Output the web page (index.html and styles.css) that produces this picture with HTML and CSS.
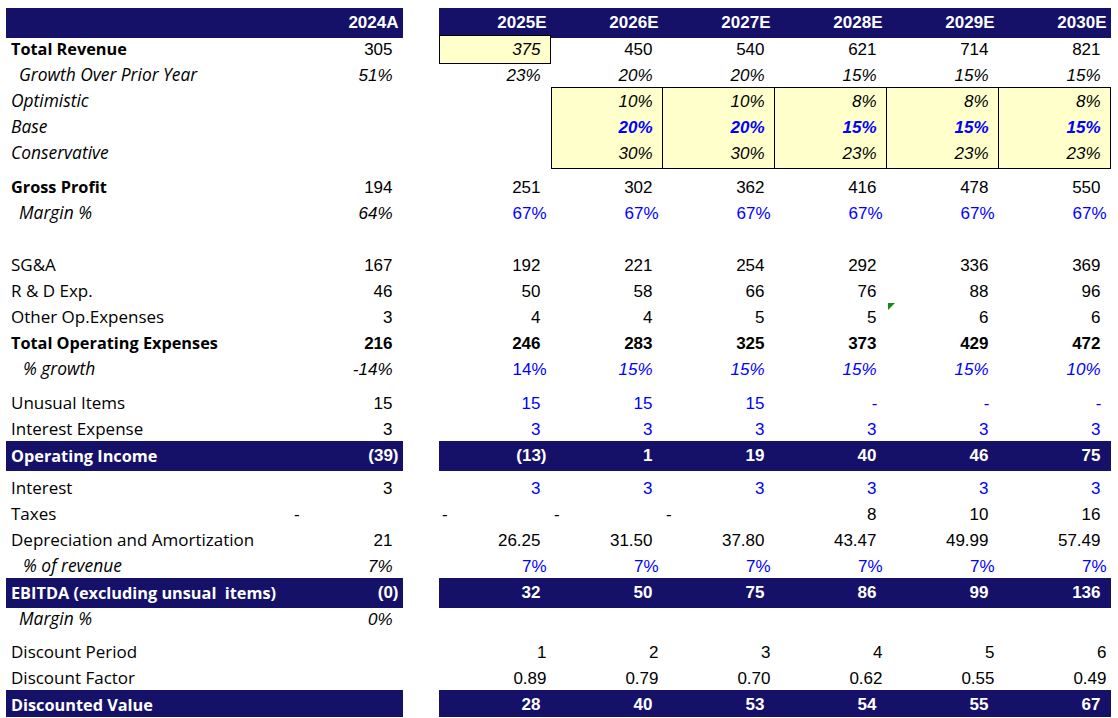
FILE: index.html
```html
<!DOCTYPE html>
<html lang="en">
<head>
<meta charset="utf-8">
<title>Revenue Projection</title>
<link rel="stylesheet" href="styles.css">
</head>
<body>
<div class="sheet">
  <div class="row t">
    <div class="lab nv"></div><div class="c nv p4">2024A</div><div class="gap"></div>
    <div class="c nv p4">2025E</div><div class="c nv p4">2026E</div><div class="c nv p4">2027E</div><div class="c nv p4">2028E</div><div class="c nv p4">2029E</div><div class="c nv p4">2030E</div>
  </div>
  <div class="row">
    <div class="lab b">Total Revenue</div><div class="c">305</div><div class="gap"></div>
    <div class="c i yb">375</div><div class="c">450</div><div class="c">540</div><div class="c">621</div><div class="c">714</div><div class="c">821</div>
  </div>
  <div class="row">
    <div class="lab i in1">Growth Over Prior Year</div><div class="c i">51%</div><div class="gap"></div>
    <div class="c i">23%</div><div class="c i">20%</div><div class="c i">20%</div><div class="c i">15%</div><div class="c i">15%</div><div class="c i">15%</div>
  </div>
  <div class="row">
    <div class="lab i">Optimistic</div><div class="c"></div><div class="gap"></div>
    <div class="c"></div><div class="c i bx bt bl">10%</div><div class="c i bx bt">10%</div><div class="c i bx bt">8%</div><div class="c i bx bt">8%</div><div class="c i bx bt">8%</div>
  </div>
  <div class="row">
    <div class="lab i">Base</div><div class="c"></div><div class="gap"></div>
    <div class="c"></div><div class="c i b blue bx bl">20%</div><div class="c i b blue bx">20%</div><div class="c i b blue bx">15%</div><div class="c i b blue bx">15%</div><div class="c i b blue bx">15%</div>
  </div>
  <div class="row">
    <div class="lab i">Conservative</div><div class="c"></div><div class="gap"></div>
    <div class="c"></div><div class="c i bx bl">30%</div><div class="c i bx">30%</div><div class="c i bx">23%</div><div class="c i bx">23%</div><div class="c i bx">23%</div>
  </div>
  <div class="sp8"></div>
  <div class="row">
    <div class="lab b">Gross Profit</div><div class="c">194</div><div class="gap"></div>
    <div class="c">251</div><div class="c">302</div><div class="c">362</div><div class="c">416</div><div class="c">478</div><div class="c">550</div>
  </div>
  <div class="row">
    <div class="lab i in1">Margin %</div><div class="c i">64%</div><div class="gap"></div>
    <div class="c blue p4">67%</div><div class="c blue p4">67%</div><div class="c blue p4">67%</div><div class="c blue p4">67%</div><div class="c blue p4">67%</div><div class="c blue p4">67%</div>
  </div>
  <div class="row"></div>
  <div class="row">
    <div class="lab">SG&amp;A</div><div class="c">167</div><div class="gap"></div>
    <div class="c">192</div><div class="c">221</div><div class="c">254</div><div class="c">292</div><div class="c">336</div><div class="c">369</div>
  </div>
  <div class="row">
    <div class="lab">R &amp; D Exp.</div><div class="c">46</div><div class="gap"></div>
    <div class="c">50</div><div class="c">58</div><div class="c">66</div><div class="c">76</div><div class="c">88</div><div class="c">96</div>
  </div>
  <div class="row">
    <div class="lab">Other Op.Expenses</div><div class="c">3</div><div class="gap"></div>
    <div class="c">4</div><div class="c">4</div><div class="c">5</div><div class="c">5</div><div class="c flag">6</div><div class="c">6</div>
  </div>
  <div class="row">
    <div class="lab b">Total Operating Expenses</div><div class="c b">216</div><div class="gap"></div>
    <div class="c b">246</div><div class="c b">283</div><div class="c b">325</div><div class="c b">373</div><div class="c b">429</div><div class="c b">472</div>
  </div>
  <div class="row">
    <div class="lab i in2">% growth</div><div class="c i">-14%</div><div class="gap"></div>
    <div class="c blue p4">14%</div><div class="c i blue">15%</div><div class="c i blue">15%</div><div class="c i blue">15%</div><div class="c i blue">15%</div><div class="c i blue">10%</div>
  </div>
  <div class="sp8"></div>
  <div class="row">
    <div class="lab">Unusual Items</div><div class="c">15</div><div class="gap"></div>
    <div class="c blue">15</div><div class="c blue">15</div><div class="c blue">15</div><div class="c blue dash">-</div><div class="c blue dash">-</div><div class="c blue dash">-</div>
  </div>
  <div class="row">
    <div class="lab">Interest Expense</div><div class="c">3</div><div class="gap"></div>
    <div class="c blue">3</div><div class="c blue">3</div><div class="c blue">3</div><div class="c blue">3</div><div class="c blue">3</div><div class="c blue">3</div>
  </div>
  <div class="row t s">
    <div class="lab nv">Operating Income</div><div class="c nv p4">(39)</div><div class="gap"></div>
    <div class="c nv p4">(13)</div><div class="c nv">1</div><div class="c nv">19</div><div class="c nv">40</div><div class="c nv">46</div><div class="c nv">75</div>
  </div>
  <div class="sp7"></div>
  <div class="row">
    <div class="lab">Interest</div><div class="c">3</div><div class="gap"></div>
    <div class="c blue">3</div><div class="c blue">3</div><div class="c blue">3</div><div class="c blue">3</div><div class="c blue">3</div><div class="c blue">3</div>
  </div>
  <div class="row">
    <div class="lab">Taxes</div><div class="c dl">-</div><div class="gap"></div>
    <div class="c dl">-</div><div class="c dl">-</div><div class="c dl">-</div><div class="c">8</div><div class="c">10</div><div class="c">16</div>
  </div>
  <div class="row">
    <div class="lab">Depreciation and Amortization</div><div class="c">21</div><div class="gap"></div>
    <div class="c">26.25</div><div class="c">31.50</div><div class="c">37.80</div><div class="c">43.47</div><div class="c">49.99</div><div class="c">57.49</div>
  </div>
  <div class="row">
    <div class="lab i in2">% of revenue</div><div class="c i">7%</div><div class="gap"></div>
    <div class="c blue p4">7%</div><div class="c blue p4">7%</div><div class="c blue p4">7%</div><div class="c blue p4">7%</div><div class="c blue p4">7%</div><div class="c blue p4">7%</div>
  </div>
  <div class="row t">
    <div class="lab nv">EBITDA (excluding unsual&nbsp; items)</div><div class="c nv p4">(0)</div><div class="gap"></div>
    <div class="c nv">32</div><div class="c nv">50</div><div class="c nv">75</div><div class="c nv">86</div><div class="c nv">99</div><div class="c nv">136</div>
  </div>
  <div class="row">
    <div class="lab i in1">Margin %</div><div class="c i">0%</div><div class="gap"></div>
  </div>
  <div class="sp7"></div>
  <div class="row">
    <div class="lab">Discount Period</div><div class="c"></div><div class="gap"></div>
    <div class="c p4">1</div><div class="c p4">2</div><div class="c p4">3</div><div class="c p4">4</div><div class="c p4">5</div><div class="c p4">6</div>
  </div>
  <div class="row">
    <div class="lab">Discount Factor</div><div class="c"></div><div class="gap"></div>
    <div class="c p4">0.89</div><div class="c p4">0.79</div><div class="c p4">0.70</div><div class="c p4">0.62</div><div class="c p4">0.55</div><div class="c p4">0.49</div>
  </div>
  <div class="row t">
    <div class="lab nv">Discounted Value</div><div class="c nv"></div><div class="gap"></div>
    <div class="c nv">28</div><div class="c nv">40</div><div class="c nv">53</div><div class="c nv">54</div><div class="c nv">55</div><div class="c nv">67</div>
  </div>
</div>
</body>
</html>
```
FILE: styles.css
```css
html, body {
  margin: 0;
  padding: 0;
  background: #ffffff;
}

.sheet {
  padding: 8px 0 0 6px;
  color: #000000;
}

.row {
  display: grid;
  grid-template-columns: 285px 112px 36px repeat(6, 112px);
  height: 26px;
}

.row.t {
  height: 27px;
}

.row.t.s {
  height: 26px;
}

.sp7 { height: 7px; }
.sp8 { height: 8px; }

.c {
  box-sizing: border-box;
  font-family: "Liberation Sans", Arial, sans-serif;
  font-size: 17px;
  line-height: 29px;
  text-align: right;
  padding-right: 10.5px;
  white-space: nowrap;
  position: relative;
}

.c.p4 { padding-right: 4.5px; }
.c.dash { padding-right: 9.5px; }
.c.dl { text-align: left; padding-left: 3px; padding-right: 0; }

.lab {
  box-sizing: border-box;
  font-family: "Open Sans", "Noto Sans", sans-serif;
  font-size: 17px;
  line-height: 28px;
  text-align: left;
  padding-left: 5px;
  white-space: nowrap;
}

.lab.i {
  font-size: 17.4px;
  line-height: 27.5px;
}

.lab.b,
.lab.nv {
  font-size: 16.3px;
  line-height: 28px;
}

.lab.in1 { padding-left: 13px; }
.lab.in2 { padding-left: 17px; }

.b { font-weight: bold; }
.i { font-style: italic; }
.blue { color: #0000ff; }

.nv {
  background: #161168;
  color: #ffffff;
  font-weight: bold;
}

.t .c { line-height: 30px; }
.t .lab { line-height: 30px; }

.yb {
  background: #ffffcc;
  border: 1px solid #000000;
  line-height: 27px;
  padding-right: 9.5px;
}

.bx {
  background: #ffffcc;
  border-right: 1px solid #000000;
  border-bottom: 1px solid #000000;
  line-height: 29px;
  padding-right: 9.5px;
}

.bx.bt { border-top: 1px solid #000000; line-height: 27px; }
.bx.bl { border-left: 1px solid #000000; }

.flag::before {
  content: "";
  position: absolute;
  top: 0;
  left: 1px;
  width: 0;
  height: 0;
  border-top: 7px solid #138a13;
  border-right: 7px solid transparent;
}
```
